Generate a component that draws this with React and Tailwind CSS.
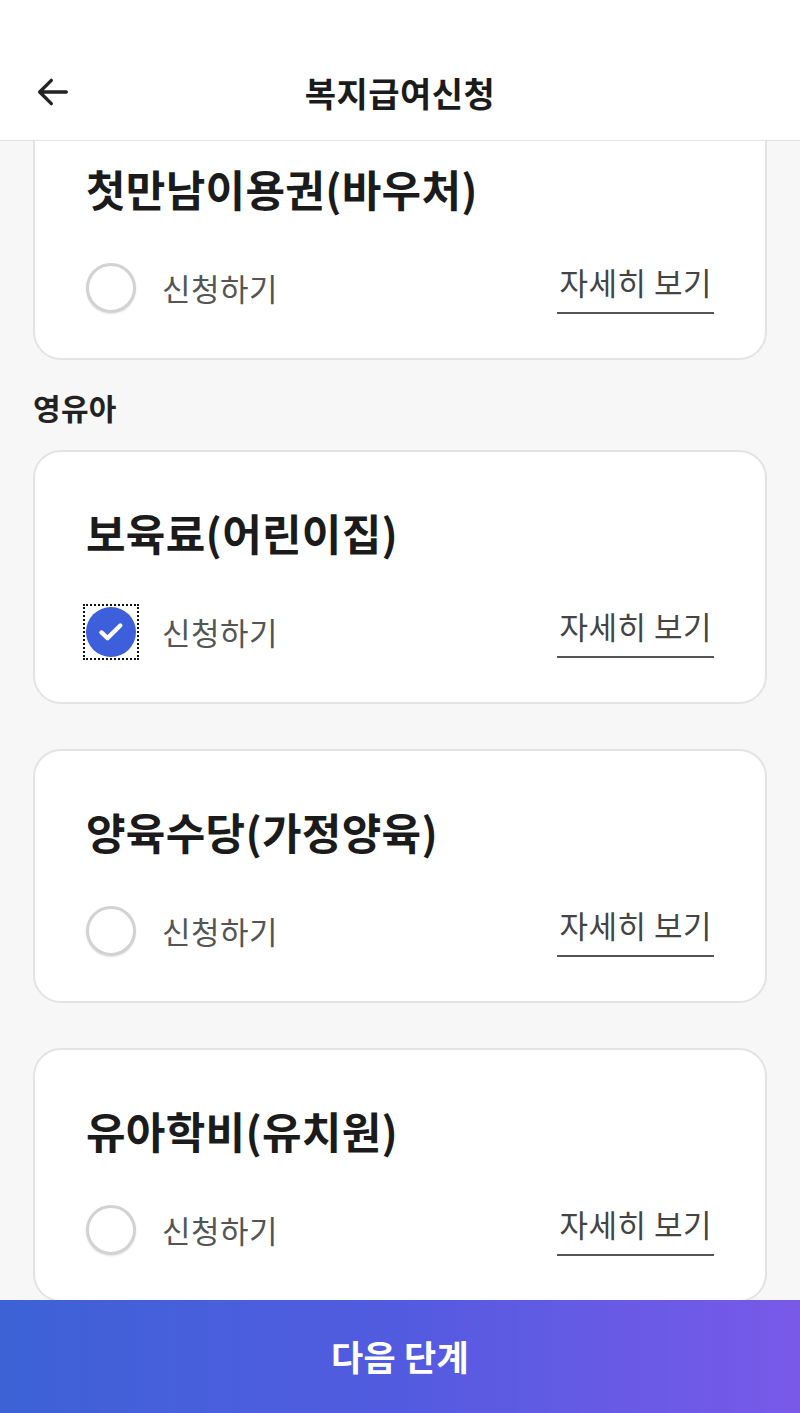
import React, { useState } from 'react';

const programs = [
  { id: 'voucher', name: '첫만남이용권(바우처)', group: null },
  { id: 'daycare', name: '보육료(어린이집)', group: '영유아' },
  { id: 'homecare', name: '양육수당(가정양육)', group: null },
  { id: 'kinder', name: '유아학비(유치원)', group: null },
];

function Radio({ checked }) {
  if (checked) {
    return (
      <span className="w-[56px] h-[56px] -m-[3px] flex items-center justify-center outline-2 outline-dotted outline-[#111] -outline-offset-2">
        <span className="w-[50px] h-[50px] rounded-full bg-[#3d5fdc] flex items-center justify-center">
          <svg width="32" height="32" viewBox="0 0 24 24" fill="none">
            <path d="M4.8 12.3l4.6 4.3 9.6-9.4" stroke="white" strokeWidth="3.2" strokeLinecap="round" strokeLinejoin="round" />
          </svg>
        </span>
      </span>
    );
  }
  return <span className="w-[50px] h-[50px] rounded-full border-[3px] border-[#d2d2d2] bg-white shadow-[0_1px_2px_rgba(0,0,0,0.12)]" />;
}

function ProgramCard({ item, checked, onToggle }) {
  return (
    <div className="h-[254px] bg-white border-2 border-[#e3e3e3] rounded-[28px] px-[51px] pt-[54px]">
      <h2 className="text-[43px] leading-[52px] font-bold text-[#1b1b1b] tracking-[0.3px]">{item.name}</h2>
      <div className="mt-[46px] flex items-center justify-between h-[56px]">
        <button onClick={onToggle} className="flex items-center gap-[26px]">
          <Radio checked={checked} />
          <span className="text-[31px] text-[#555] tracking-[0.5px]">신청하기</span>
        </button>
        <a className="text-[31px] leading-[40px] text-[#444] tracking-[0.5px] pb-[10px] border-b-2 border-[#555] px-[2px]">
          자세히 보기
        </a>
      </div>
    </div>
  );
}

export default function App() {
  const [selected, setSelected] = useState({ daycare: true });

  return (
    <div className="w-[800px] h-[1413px] flex flex-col bg-[#f7f7f7] overflow-hidden" style={{ fontFamily: '"Noto Sans CJK KR", "Noto Sans", sans-serif' }}>
      {/* header */}
      <header className="h-[141px] shrink-0 bg-white border-b border-[#e2e2e2] pt-[44px] relative flex items-center justify-center">
        <button className="absolute left-[33px] top-[72px]">
          <svg width="40" height="40" viewBox="0 0 24 24" fill="none">
            <path d="M20 12H4.5M11 5l-7 7 7 7" stroke="#222" strokeWidth="2" strokeLinecap="round" strokeLinejoin="round" />
          </svg>
        </button>
        <h1 className="text-[34px] font-bold text-[#1b1b1b] tracking-[0.5px]">복지급여신청</h1>
      </header>

      {/* scrolled list */}
      <div className="flex-1 overflow-hidden px-[33px]">
        <div className="-mt-[35px] flex flex-col">
          {programs.map((item, i) => (
            <React.Fragment key={item.id}>
              {item.group ? (
                <p className="mt-[27px] mb-[23px] text-[30px] leading-[40px] font-bold text-[#222] tracking-[0.3px]">{item.group}</p>
              ) : i > 0 ? (
                <div className="h-[45px]" />
              ) : null}
              <ProgramCard
                item={item}
                checked={!!selected[item.id]}
                onToggle={() => setSelected(s => ({ ...s, [item.id]: !s[item.id] }))}
              />
            </React.Fragment>
          ))}
        </div>
      </div>

      {/* bottom button */}
      <button className="h-[113px] shrink-0 bg-gradient-to-r from-[#3c62d6] via-[#525be0] to-[#7859e8] text-white text-[35px] font-bold tracking-[0.3px]">
        다음 단계
      </button>
    </div>
  );
}
